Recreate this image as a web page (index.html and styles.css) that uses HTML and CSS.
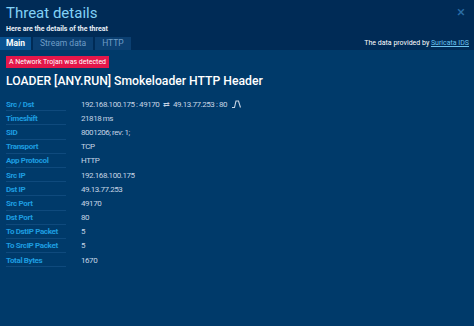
FILE: index.html
```html
<!DOCTYPE html>
<html lang="en">

<head>
    <title>Threat details</title>
    <link rel="stylesheet" href="styles.css">
</head>

<body>
    <div class="modal">
        <div class="modal-head">
            <p class="head-title">Threat details</p>
            <p class="head-sub">Here are the details of the threat</p>
            <span class="close">&times;</span>

            <div class="tabs">
                <span class="tab tab-active">Main</span>
                <span class="tab">Stream data</span>
                <span class="tab">HTTP</span>
                <p class="provider">The data provided by <a href="#">Suricata IDS</a></p>
            </div>
        </div>

        <div class="modal-body">
            <span class="badge">A Network Trojan was detected</span>
            <p class="threat-name">LOADER [ANY.RUN] Smokeloader HTTP Header</p>

            <table class="info">
                <tr>
                    <td class="label">Src / Dst</td>
                    <td class="value">192.168.100.175 : 49170 <span class="arrows">&#8644;</span> 49.13.77.253 : 80
                        <svg class="wave" width="10" height="8" viewBox="0 0 10 8">
                            <path d="M1 7.5 L3.5 7.5 L5 1 L7.5 1 L9.5 7.5" fill="none" stroke="#c8d6e6" stroke-width="1.1"/>
                        </svg>
                    </td>
                </tr>
                <tr><td class="label">Timeshift</td><td class="value">21818 ms</td></tr>
                <tr><td class="label">SID</td><td class="value">8001206; rev: 1;</td></tr>
                <tr><td class="label">Transport</td><td class="value">TCP</td></tr>
                <tr><td class="label">App Protocol</td><td class="value">HTTP</td></tr>
                <tr><td class="label">Src IP</td><td class="value">192.168.100.175</td></tr>
                <tr><td class="label">Dst IP</td><td class="value">49.13.77.253</td></tr>
                <tr><td class="label">Src Port</td><td class="value">49170</td></tr>
                <tr><td class="label">Dst Port</td><td class="value">80</td></tr>
                <tr><td class="label">To DstIP Packet</td><td class="value">5</td></tr>
                <tr><td class="label">To SrcIP Packet</td><td class="value">5</td></tr>
                <tr><td class="label">Total Bytes</td><td class="value">1670</td></tr>
            </table>
        </div>
    </div>
</body>

</html>
```

FILE: styles.css
```css
body {
    margin: 0;
    background-color: #003a6a;
    font-family: Roboto, "Liberation Sans", sans-serif;
    width: 474px;
    height: 326px;
    overflow: hidden;
}

.modal {
    height: 326px;
    display: flex;
    flex-direction: column;
}

/* Dark header with title and tabs */
.modal-head {
    background-color: #002b56;
    position: relative;
    padding-top: 3px;
}

.head-title {
    margin: 0 0 0 6px;
    font-size: 15px;
    line-height: 20px;
    color: #82d2f7;
}

.head-sub {
    margin: 0 0 0 6px;
    font-size: 7px;
    font-weight: bold;
    line-height: 12px;
    color: #e6eef6;
}

.close {
    position: absolute;
    right: 9px;
    top: 3px;
    font-size: 15px;
    color: #2b6ea6;
}

.tabs {
    display: flex;
    align-items: stretch;
    margin-top: 2px;
    height: 13px;
}

.tab {
    background-color: #0b3f71;
    color: #6f9dc6;
    font-size: 8.5px;
    line-height: 13px;
    padding: 0 7px;
    margin-right: 2px;
}

.tab-active {
    background-color: #0a5291;
    color: #ffffff;
    font-weight: bold;
    padding: 0 6px;
}

.provider {
    margin: 0 5px 0 auto;
    font-size: 7px;
    line-height: 12px;
    color: #ffffff;
}

.provider a {
    color: #6cc3f0;
}

/* Main body */
.modal-body {
    flex: 1;
    padding: 6px 6px 0 6px;
    display: flex;
    flex-direction: column;
    align-items: flex-start;
}

.badge {
    background-color: #e4174a;
    color: #ffffff;
    font-size: 7px;
    line-height: 12px;
    padding: 0 3px;
}

.threat-name {
    margin: 6px 0 9px 0;
    font-size: 12.2px;
    font-weight: 500;
    color: #ffffff;
}

.info {
    border-collapse: collapse;
}

.info td {
    height: 14.2px;
    padding: 0;
}

.label {
    width: 75px;
    font-size: 8px;
    letter-spacing: -0.35px;
    font-weight: bold;
    color: #1d9de0;
    background-image: linear-gradient(#0f4a7d, #0f4a7d);
    background-size: 60px 1px;
    background-position: left bottom;
    background-repeat: no-repeat;
}

.value {
    font-size: 8px;
    letter-spacing: -0.45px;
    color: #c6d5e5;
}

.arrows {
    margin: 0 2px;
}

.wave {
    margin-left: 2px;
    vertical-align: -1px;
}
```
